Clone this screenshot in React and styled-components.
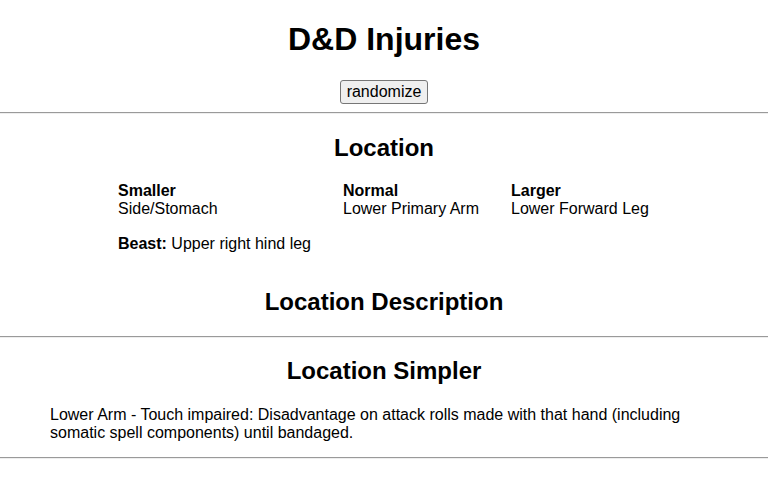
import React from "react";
import styled, { createGlobalStyle } from "styled-components";

const GlobalStyle = createGlobalStyle`
  body {
    margin: 0;
    background: #fff;
    color: #000;
    font-family: "Liberation Sans", Arial, sans-serif;
  }
`;

const Page = styled.div`
  text-align: center;
`;

const Title = styled.h1`
  font-size: 32px;
  margin: 21.44px 0;
`;

const Button = styled.button`
  font-family: "Liberation Sans", Arial, sans-serif;
  font-size: 16px;
  padding: 2px 6px;
  background: #efefef;
  border: 1px solid #767676;
  border-radius: 3px;
  color: #000;
`;

const Rule = styled.hr`
  margin: 8px 0;
  border: none;
  border-top: 1px solid #9a9a9a;
  border-bottom: 1px solid #eee;
`;

const Heading = styled.h2`
  font-size: 24px;
  margin: ${(p) => (p.$tight ? "19px 0 21px" : "19.92px 0")};
`;

const Wrapper = styled.div`
  width: 532px;
  margin: 0 auto;
  text-align: left;
  display: flow-root;
`;

const SizeGrid = styled.div`
  display: grid;
  grid-template-columns: 225px 168px 1fr;
`;

const SizeCell = styled.div`
  line-height: 18.4px;
`;

const Label = styled.div`
  font-weight: bold;
`;

const Beast = styled.p`
  margin: 16px 0 15px;
  line-height: 18.4px;
`;

const Text = styled.p`
  margin: 16px 50px 14px;
  text-align: left;
  line-height: 18.4px;
`;

const sizes = [
  { label: "Smaller", value: "Side/Stomach" },
  { label: "Normal", value: "Lower Primary Arm" },
  { label: "Larger", value: "Lower Forward Leg" },
];

export default function App() {
  return (
    <Page>
      <GlobalStyle />
      <Title>D&amp;D Injuries</Title>
      <Button>randomize</Button>
      <Rule />
      <Heading>Location</Heading>
      <Wrapper>
        <SizeGrid>
          {sizes.map((s) => (
            <SizeCell key={s.label}>
              <Label>{s.label}</Label>
              {s.value}
            </SizeCell>
          ))}
        </SizeGrid>
        <Beast>
          <b>Beast:</b> Upper right hind leg
        </Beast>
      </Wrapper>
      <Heading>Location Description</Heading>
      <Rule />
      <Heading $tight>Location Simpler</Heading>
      <Text>
        Lower Arm - Touch impaired: Disadvantage on attack rolls made with that
        hand (including somatic spell components) until bandaged.
      </Text>
      <Rule />
    </Page>
  );
}
